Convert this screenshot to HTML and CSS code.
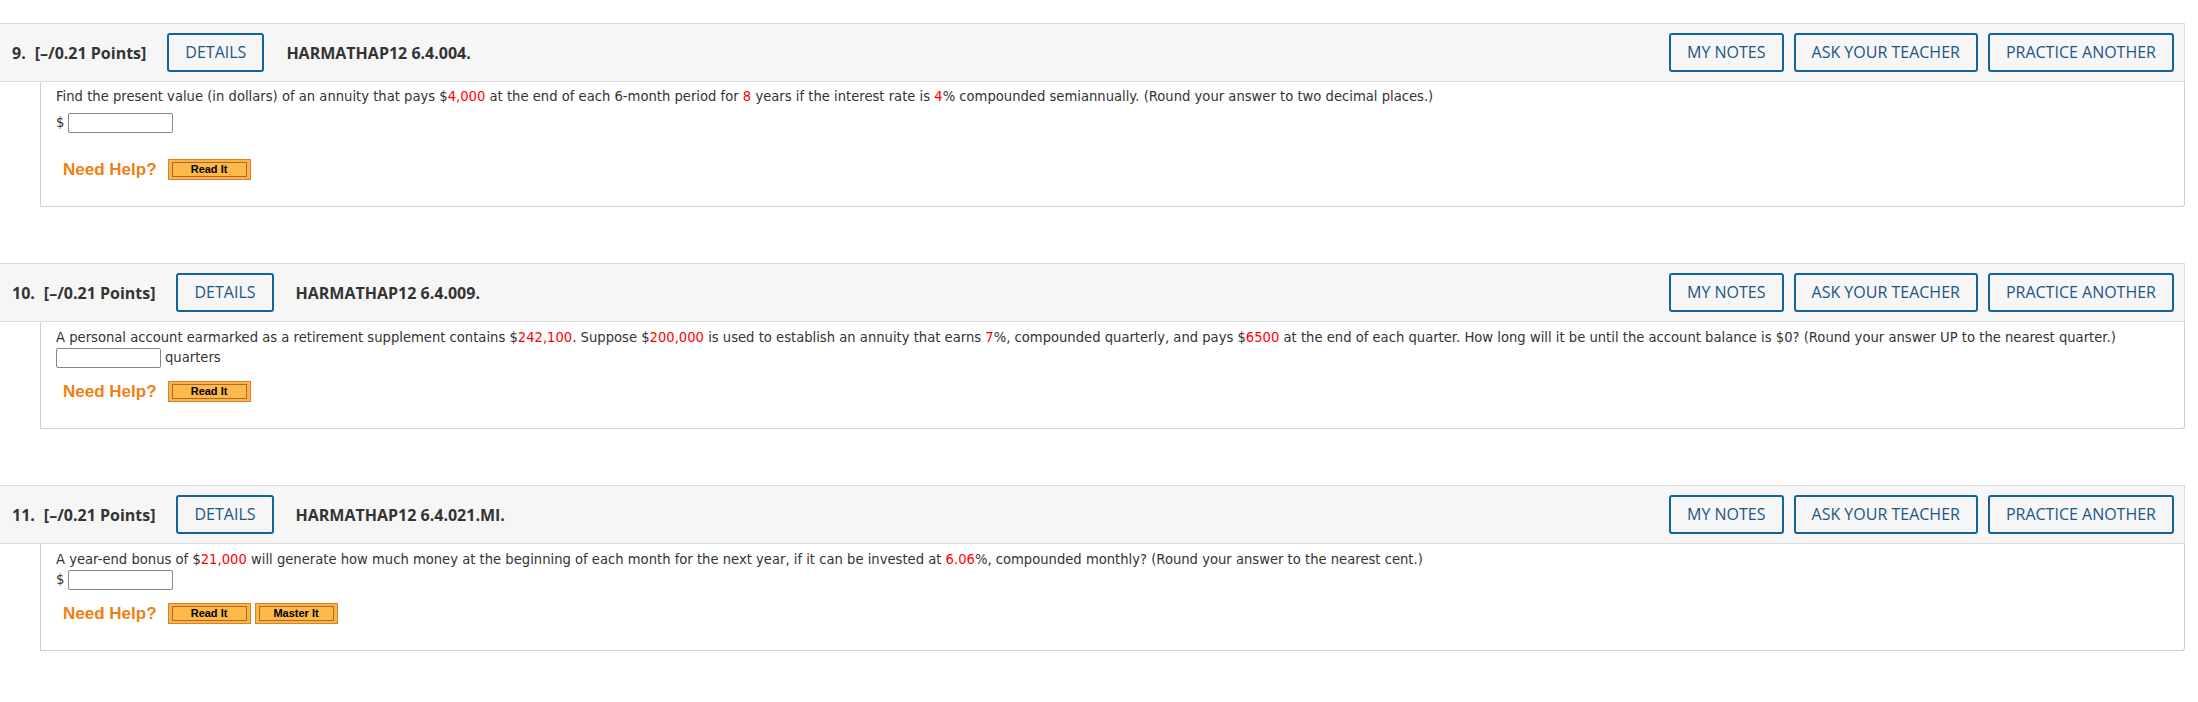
FILE: index.html
```html
<!DOCTYPE html>
<html>
<head>
<meta charset="utf-8">
<link rel="stylesheet" href="styles.css">
</head>
<body>
<div class="page">

  <section class="question">
    <div class="q-header">
      <span class="q-num">9.</span>
      <span class="q-points">[–/0.21 Points]</span>
      <button class="hbtn details">DETAILS</button>
      <span class="q-title">HARMATHAP12 6.4.004.</span>
      <div class="spacer"></div>
      <div class="actions">
        <button class="hbtn">MY NOTES</button>
        <button class="hbtn">ASK YOUR TEACHER</button>
        <button class="hbtn">PRACTICE ANOTHER</button>
      </div>
    </div>
    <div class="q-body first">
      <div class="q-text">Find the present value (in dollars) of an annuity that pays $<span class="red">4,000</span> at the end of each 6-month period for <span class="red">8</span> years if the interest rate is <span class="red">4</span>% compounded semiannually. (Round your answer to two decimal places.)</div>
      <div class="answer"><span class="unit">$</span><span class="field"></span></div>
      <div class="help">
        <span class="need">Need Help?</span>
        <button class="obtn"><span class="obtn-in">Read It</span></button>
      </div>
    </div>
  </section>

  <section class="question">
    <div class="q-header">
      <span class="q-num">10.</span>
      <span class="q-points">[–/0.21 Points]</span>
      <button class="hbtn details">DETAILS</button>
      <span class="q-title">HARMATHAP12 6.4.009.</span>
      <div class="spacer"></div>
      <div class="actions">
        <button class="hbtn">MY NOTES</button>
        <button class="hbtn">ASK YOUR TEACHER</button>
        <button class="hbtn">PRACTICE ANOTHER</button>
      </div>
    </div>
    <div class="q-body">
      <div class="q-text">A personal account earmarked as a retirement supplement contains $<span class="red">242,100</span>. Suppose $<span class="red">200,000</span> is used to establish an annuity that earns <span class="red">7</span>%, compounded quarterly, and pays $<span class="red">6500</span> at the end of each quarter. How long will it be until the account balance is $0? (Round your answer UP to the nearest quarter.)</div>
      <div class="answer"><span class="field"></span><span class="unit">quarters</span></div>
      <div class="help">
        <span class="need">Need Help?</span>
        <button class="obtn"><span class="obtn-in">Read It</span></button>
      </div>
    </div>
  </section>

  <section class="question">
    <div class="q-header">
      <span class="q-num">11.</span>
      <span class="q-points">[–/0.21 Points]</span>
      <button class="hbtn details">DETAILS</button>
      <span class="q-title">HARMATHAP12 6.4.021.MI.</span>
      <div class="spacer"></div>
      <div class="actions">
        <button class="hbtn">MY NOTES</button>
        <button class="hbtn">ASK YOUR TEACHER</button>
        <button class="hbtn">PRACTICE ANOTHER</button>
      </div>
    </div>
    <div class="q-body">
      <div class="q-text">A year-end bonus of $<span class="red">21,000</span> will generate how much money at the beginning of each month for the next year, if it can be invested at <span class="red">6.06</span>%, compounded monthly? (Round your answer to the nearest cent.)</div>
      <div class="answer"><span class="unit">$</span><span class="field"></span></div>
      <div class="help">
        <span class="need">Need Help?</span>
        <button class="obtn"><span class="obtn-in">Read It</span></button>
        <button class="obtn"><span class="obtn-in">Master It</span></button>
      </div>
    </div>
  </section>

</div>
</body>
</html>
```

FILE: styles.css
```css
html, body {
  margin: 0;
  padding: 0;
  background: #ffffff;
}

.page {
  padding: 23px 13px 0 0;
  display: flex;
  flex-direction: column;
  gap: 56px;
}

.question {
  display: flex;
  flex-direction: column;
}

.q-header {
  display: flex;
  align-items: center;
  background: #f6f6f6;
  border-top: 1px solid #dcdcdc;
  border-bottom: 1px solid #dcdcdc;
  border-right: 1px solid #dcdcdc;
  padding: 9px 10px 9px 12px;
  font-family: "Open Sans", "Liberation Sans", sans-serif;
  font-size: 16px;
  color: #333333;
}

.q-num {
  font-weight: 700;
}

.q-points {
  font-weight: 700;
  margin-left: 9px;
}

.q-title {
  font-weight: 700;
  margin-left: 22px;
}

.spacer {
  flex: 1;
}

.actions {
  display: flex;
  gap: 10px;
}

.hbtn {
  height: 39px;
  box-sizing: border-box;
  padding: 0 16px;
  border: 2px solid #14639a;
  border-radius: 3px;
  background: #f6f6f6;
  color: #1d5585;
  font-family: "Open Sans", "Liberation Sans", sans-serif;
  font-size: 16px;
  font-weight: 500;
  line-height: 35px;
  cursor: pointer;
}

.details {
  margin-left: 21px;
}

.q-body {
  margin-left: 40px;
  border-left: 1px solid #cfcfcf;
  border-right: 1px solid #cfcfcf;
  border-bottom: 1px solid #cfcfcf;
  border-bottom-right-radius: 3px;
  padding: 8px 0 26px 15px;
  font-family: "DejaVu Sans", Verdana, sans-serif;
  font-size: 13.17px;
  color: #333333;
}

.q-body.first {
  padding-top: 7px;
}

.q-text {
  line-height: 16px;
}

.red {
  color: #ff0000;
}

.answer {
  display: flex;
  align-items: center;
  gap: 4px;
  margin-top: 2px;
  line-height: 16px;
}

.first .answer {
  margin-top: 8px;
}

.field {
  display: block;
  width: 105px;
  height: 20px;
  box-sizing: border-box;
  border: 1px solid #858585;
  border-radius: 2px;
  background: #ffffff;
}

.help {
  display: flex;
  align-items: center;
  gap: 4px;
  margin-top: 13px;
  padding-left: 7px;
}

.first .help {
  margin-top: 26px;
}

.need {
  font-family: "Liberation Sans", Arial, sans-serif;
  font-weight: 700;
  font-size: 17px;
  color: #ef7f12;
  margin-right: 7px;
}

.obtn {
  width: 83px;
  height: 21px;
  box-sizing: border-box;
  padding: 2px 3px;
  border: 1px solid #d9822c;
  background: #fbb24b;
  cursor: pointer;
  display: flex;
}

.obtn-in {
  flex: 1;
  display: block;
  border: 1px solid #b06a22;
  background: #fdb94b;
  font-family: "Liberation Sans", Arial, sans-serif;
  font-weight: 700;
  font-size: 11px;
  line-height: 13px;
  color: #000000;
  text-align: center;
}
```
